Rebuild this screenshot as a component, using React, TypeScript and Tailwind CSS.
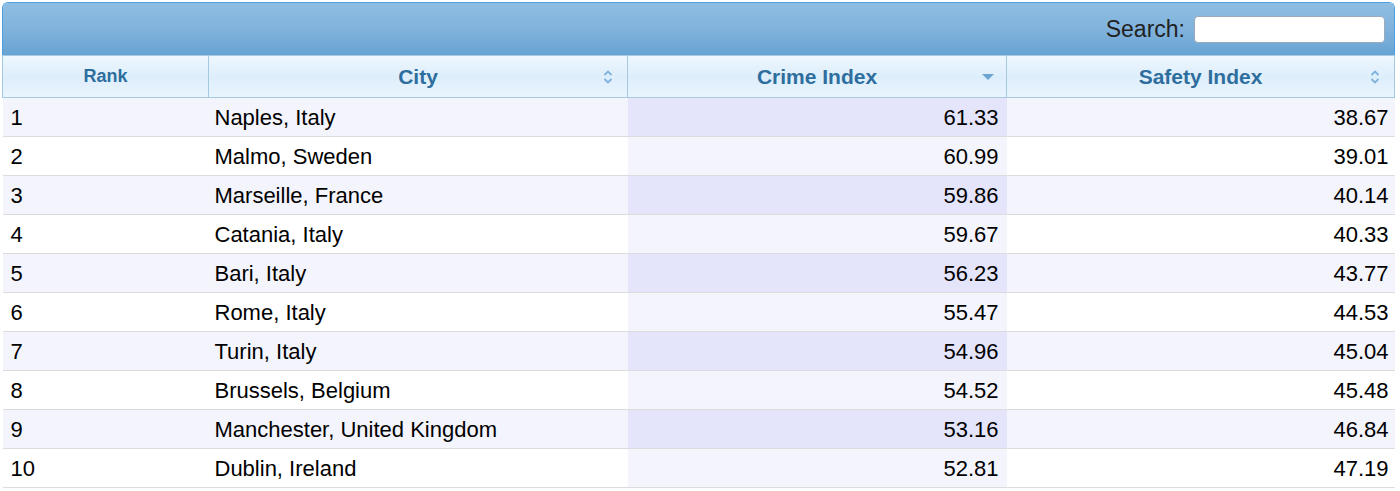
import React from 'react'

const rows = [
  [1, 'Naples, Italy', '61.33', '38.67'],
  [2, 'Malmo, Sweden', '60.99', '39.01'],
  [3, 'Marseille, France', '59.86', '40.14'],
  [4, 'Catania, Italy', '59.67', '40.33'],
  [5, 'Bari, Italy', '56.23', '43.77'],
  [6, 'Rome, Italy', '55.47', '44.53'],
  [7, 'Turin, Italy', '54.96', '45.04'],
  [8, 'Brussels, Belgium', '54.52', '45.48'],
  [9, 'Manchester, United Kingdom', '53.16', '46.84'],
  [10, 'Dublin, Ireland', '52.81', '47.19'],
]

function SortBoth() {
  return (
    <svg width="10" height="14" viewBox="0 0 10 14" className="absolute right-[14px] top-1/2 -translate-y-1/2">
      <path d="M1.5 5 L5 1.5 L8.5 5" fill="none" stroke="#7fb2dc" strokeWidth="1.8" />
      <path d="M1.5 9 L5 12.5 L8.5 9" fill="none" stroke="#7fb2dc" strokeWidth="1.8" />
    </svg>
  )
}

function SortDesc() {
  return (
    <svg width="12" height="8" viewBox="0 0 12 8" className="absolute right-[12px] top-1/2 -translate-y-1/2">
      <path d="M0 1 L12 1 L6 7 Z" fill="#6ea4d2" />
    </svg>
  )
}

export default function App() {
  return (
    <div className="w-[1400px] h-[491px] bg-white pt-[2px] pl-[2px] overflow-hidden" style={{ fontFamily: '"Liberation Sans", Arial, sans-serif' }}>
      <div className="w-[1393px] border border-[#4d9ee0] border-b-0 rounded-t-[6px] overflow-hidden">
        <div className="h-[52px] flex items-center justify-end pr-[9px] bg-gradient-to-b from-[#8fbde2] via-[#80b3dc] to-[#68a3d3]">
          <span className="text-[23px] text-[#222] mr-[9px]">Search:</span>
          <div className="w-[191px] h-[27px] bg-white rounded-[4px] border border-[#9ab]" />
        </div>
      </div>
      <table className="w-[1393px] border-collapse table-fixed">
        <colgroup>
          <col className="w-[206px]" />
          <col className="w-[419px]" />
          <col className="w-[379px]" />
          <col />
        </colgroup>
        <thead>
          <tr className="h-[42px] bg-gradient-to-b from-[#eef7fe] via-[#ddeefb] to-[#eaf5fe] text-[#2e6e9e] font-bold">
            <th className="border border-[#a6c9e2] text-[18px] relative">Rank</th>
            <th className="border border-[#a6c9e2] text-[21px] relative">City<SortBoth /></th>
            <th className="border border-[#a6c9e2] text-[21px] relative">Crime Index<SortDesc /></th>
            <th className="border border-[#a6c9e2] text-[21px] relative">Safety Index<SortBoth /></th>
          </tr>
        </thead>
        <tbody className="text-[22px] text-black">
          {rows.map((r, i) => {
            const odd = i % 2 === 0
            return (
              <tr key={i} className={`h-[39px] border-b border-[#dcdcdc] ${odd ? 'bg-[#f4f4fd]' : 'bg-white'}`}>
                <td className="pl-[8px]">{r[0]}</td>
                <td className="pl-[6px]">{r[1]}</td>
                <td className={`text-right pr-[8px] ${odd ? 'bg-[#e4e4fb]' : 'bg-[#f4f4fd]'}`}>{r[2]}</td>
                <td className="text-right pr-[6px]">{r[3]}</td>
              </tr>
            )
          })}
        </tbody>
      </table>
    </div>
  )
}
